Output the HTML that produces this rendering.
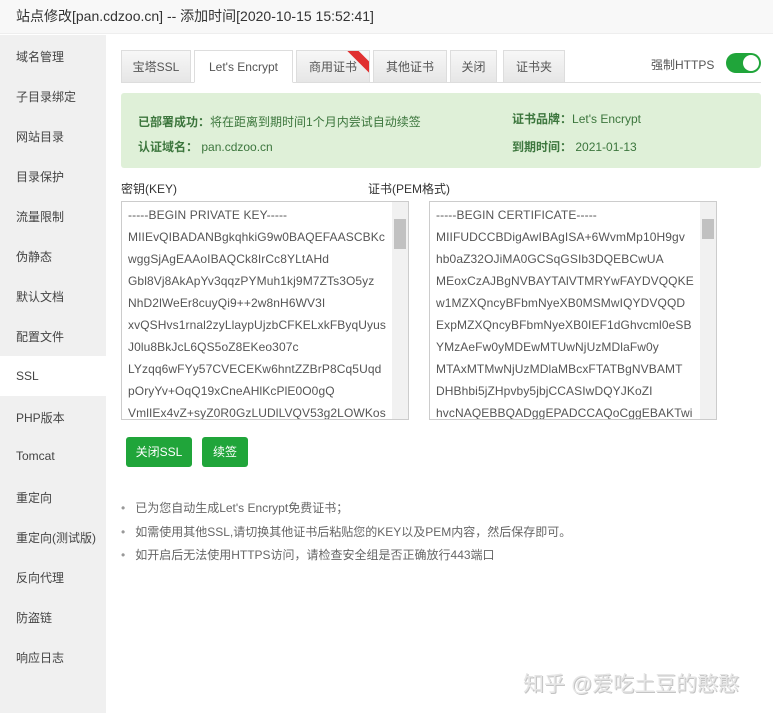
<!DOCTYPE html><html><head><meta charset="utf-8"><style>
*{margin:0;padding:0;box-sizing:border-box}
body{width:773px;height:713px;overflow:hidden;background:#fff;font-family:"Liberation Sans","Noto Sans CJK SC",sans-serif;font-size:12px;color:#333;position:relative}
.a{position:absolute;white-space:nowrap}
.title{left:0;top:0;width:773px;height:34px;background:#f8f8f8;border-bottom:1px solid #eee;font-size:14px;line-height:32px;padding-left:16px;color:#333}
.side{left:0;top:35px;width:106px;height:678px;background:#f0f0f0}
.side div{position:absolute;left:16px;font-size:12px;color:#444}
.tab{top:50px;height:33px;border:1px solid #ddd;background:linear-gradient(#f7f7f7,#e6e6e6);line-height:32px;text-align:center;color:#555;font-size:12px}
.ta{border:1px solid #ccc;background:#fff;overflow:hidden;font-size:12px;color:#555;line-height:22px;padding:2px 0 0 6px;letter-spacing:0.1px}
.sb{position:absolute;right:0;top:0;width:16px;height:100%;background:#f1f1f1}
.btn{top:437px;height:30px;background:#20a53a;color:#fff;border-radius:3px;line-height:30px;text-align:center;font-size:12px}
.li{left:121px;font-size:12px;color:#666}
.li:before{content:"•";color:#999;margin-right:10px}
</style></head><body>
<div class="a title">站点修改[pan.cdzoo.cn] -- 添加时间[2020-10-15 15:52:41]</div>
<div class="a side">
<div style="top:13px">域名管理</div><div style="top:53px">子目录绑定</div><div style="top:93px">网站目录</div><div style="top:133px">目录保护</div><div style="top:173px">流量限制</div><div style="top:213px">伪静态</div><div style="top:253px">默认文档</div><div style="top:293px">配置文件</div>
<div style="top:321px;left:0;width:106px;height:40px;background:#fff"></div>
<div style="top:334px">SSL</div><div style="top:374px">PHP版本</div><div style="top:414px">Tomcat</div><div style="top:454px">重定向</div><div style="top:494px">重定向(测试版)</div><div style="top:534px">反向代理</div><div style="top:574px">防盗链</div><div style="top:614px">响应日志</div>
</div>
<div class="a" style="left:121px;top:82px;width:640px;height:1px;background:#ddd"></div>
<div class="a tab" style="left:121px;width:70px">宝塔SSL</div>
<div class="a tab" style="left:194px;width:99px;background:#fff;border-bottom-color:#fff">Let's Encrypt</div>
<div class="a tab" style="left:296px;width:74px;overflow:hidden">商用证书<div style="position:absolute;right:-14px;top:6px;width:40px;height:8px;background:#e03030;transform:rotate(45deg)"></div></div>
<div class="a tab" style="left:373px;width:74px">其他证书</div>
<div class="a tab" style="left:450px;width:47px">关闭</div>
<div class="a tab" style="left:503px;width:62px">证书夹</div>
<div class="a" style="left:651px;top:56px;color:#555">强制HTTPS</div>
<div class="a" style="left:726px;top:53px;width:35px;height:20px;border-radius:10px;background:#20a53a"><div style="position:absolute;right:2px;top:2px;width:16px;height:16px;border-radius:50%;background:#fff"></div></div>
<div class="a" style="left:121px;top:93px;width:640px;height:75px;background:#dff0d8;border-radius:3px;color:#3c763d"></div>
<div class="a" style="left:138px;top:113px;color:#3c763d"><b>已部署成功：</b>将在距离到期时间1个月内尝试自动续签</div>
<div class="a" style="left:138px;top:138px;color:#3c763d"><b>认证域名：</b> pan.cdzoo.cn</div>
<div class="a" style="left:512px;top:110px;color:#3c763d"><b>证书品牌：</b>Let's Encrypt</div>
<div class="a" style="left:512px;top:138px;color:#3c763d"><b>到期时间：</b> 2021-01-13</div>
<div class="a" style="left:121px;top:180px">密钥(KEY)</div>
<div class="a" style="left:368px;top:180px">证书(PEM格式)</div>
<div class="a ta" style="left:121px;top:201px;width:288px;height:219px">-----BEGIN PRIVATE KEY-----<br>MIIEvQIBADANBgkqhkiG9w0BAQEFAASCBKc<br>wggSjAgEAAoIBAQCk8IrCc8YLtAHd<br>Gbl8Vj8AkApYv3qqzPYMuh1kj9M7ZTs3O5yz<br>NhD2lWeEr8cuyQi9++2w8nH6WV3I<br>xvQSHvs1rnal2zyLlaypUjzbCFKELxkFByqUyus<br>J0lu8BkJcL6QS5oZ8EKeo307c<br>LYzqq6wFYy57CVECEKw6hntZZBrP8Cq5Uqd<br>pOryYv+OqQ19xCneAHlKcPlE0O0gQ<br>VmlIEx4vZ+syZ0R0GzLUDlLVQV53g2LOWKos<div class="sb"><div style="position:absolute;left:2px;top:17px;width:12px;height:30px;background:#c1c1c1"></div></div></div>
<div class="a ta" style="left:429px;top:201px;width:288px;height:219px">-----BEGIN CERTIFICATE-----<br>MIIFUDCCBDigAwIBAgISA+6WvmMp10H9gv<br>hb0aZ32OJiMA0GCSqGSIb3DQEBCwUA<br>MEoxCzAJBgNVBAYTAlVTMRYwFAYDVQQKE<br>w1MZXQncyBFbmNyeXB0MSMwIQYDVQQD<br>ExpMZXQncyBFbmNyeXB0IEF1dGhvcml0eSB<br>YMzAeFw0yMDEwMTUwNjUzMDlaFw0y<br>MTAxMTMwNjUzMDlaMBcxFTATBgNVBAMT<br>DHBhbi5jZHpvby5jbjCCASIwDQYJKoZI<br>hvcNAQEBBQADggEPADCCAQoCggEBAKTwi<div class="sb"><div style="position:absolute;left:2px;top:17px;width:12px;height:20px;background:#c1c1c1"></div></div></div>
<div class="a btn" style="left:126px;width:66px">关闭SSL</div>
<div class="a btn" style="left:202px;width:46px">续签</div>
<div class="a li" style="top:499px">已为您自动生成Let's Encrypt免费证书；</div>
<div class="a li" style="top:523px">如需使用其他SSL,请切换其他证书后粘贴您的KEY以及PEM内容，然后保存即可。</div>
<div class="a li" style="top:546px">如开启后无法使用HTTPS访问，请检查安全组是否正确放行443端口</div>
<div class="a" style="left:523px;top:668px;font-size:21px;color:#e6e6e6;text-shadow:1px 1px 0 #c4c4c4">知乎 @爱吃土豆的憨憨</div>
</body></html>
